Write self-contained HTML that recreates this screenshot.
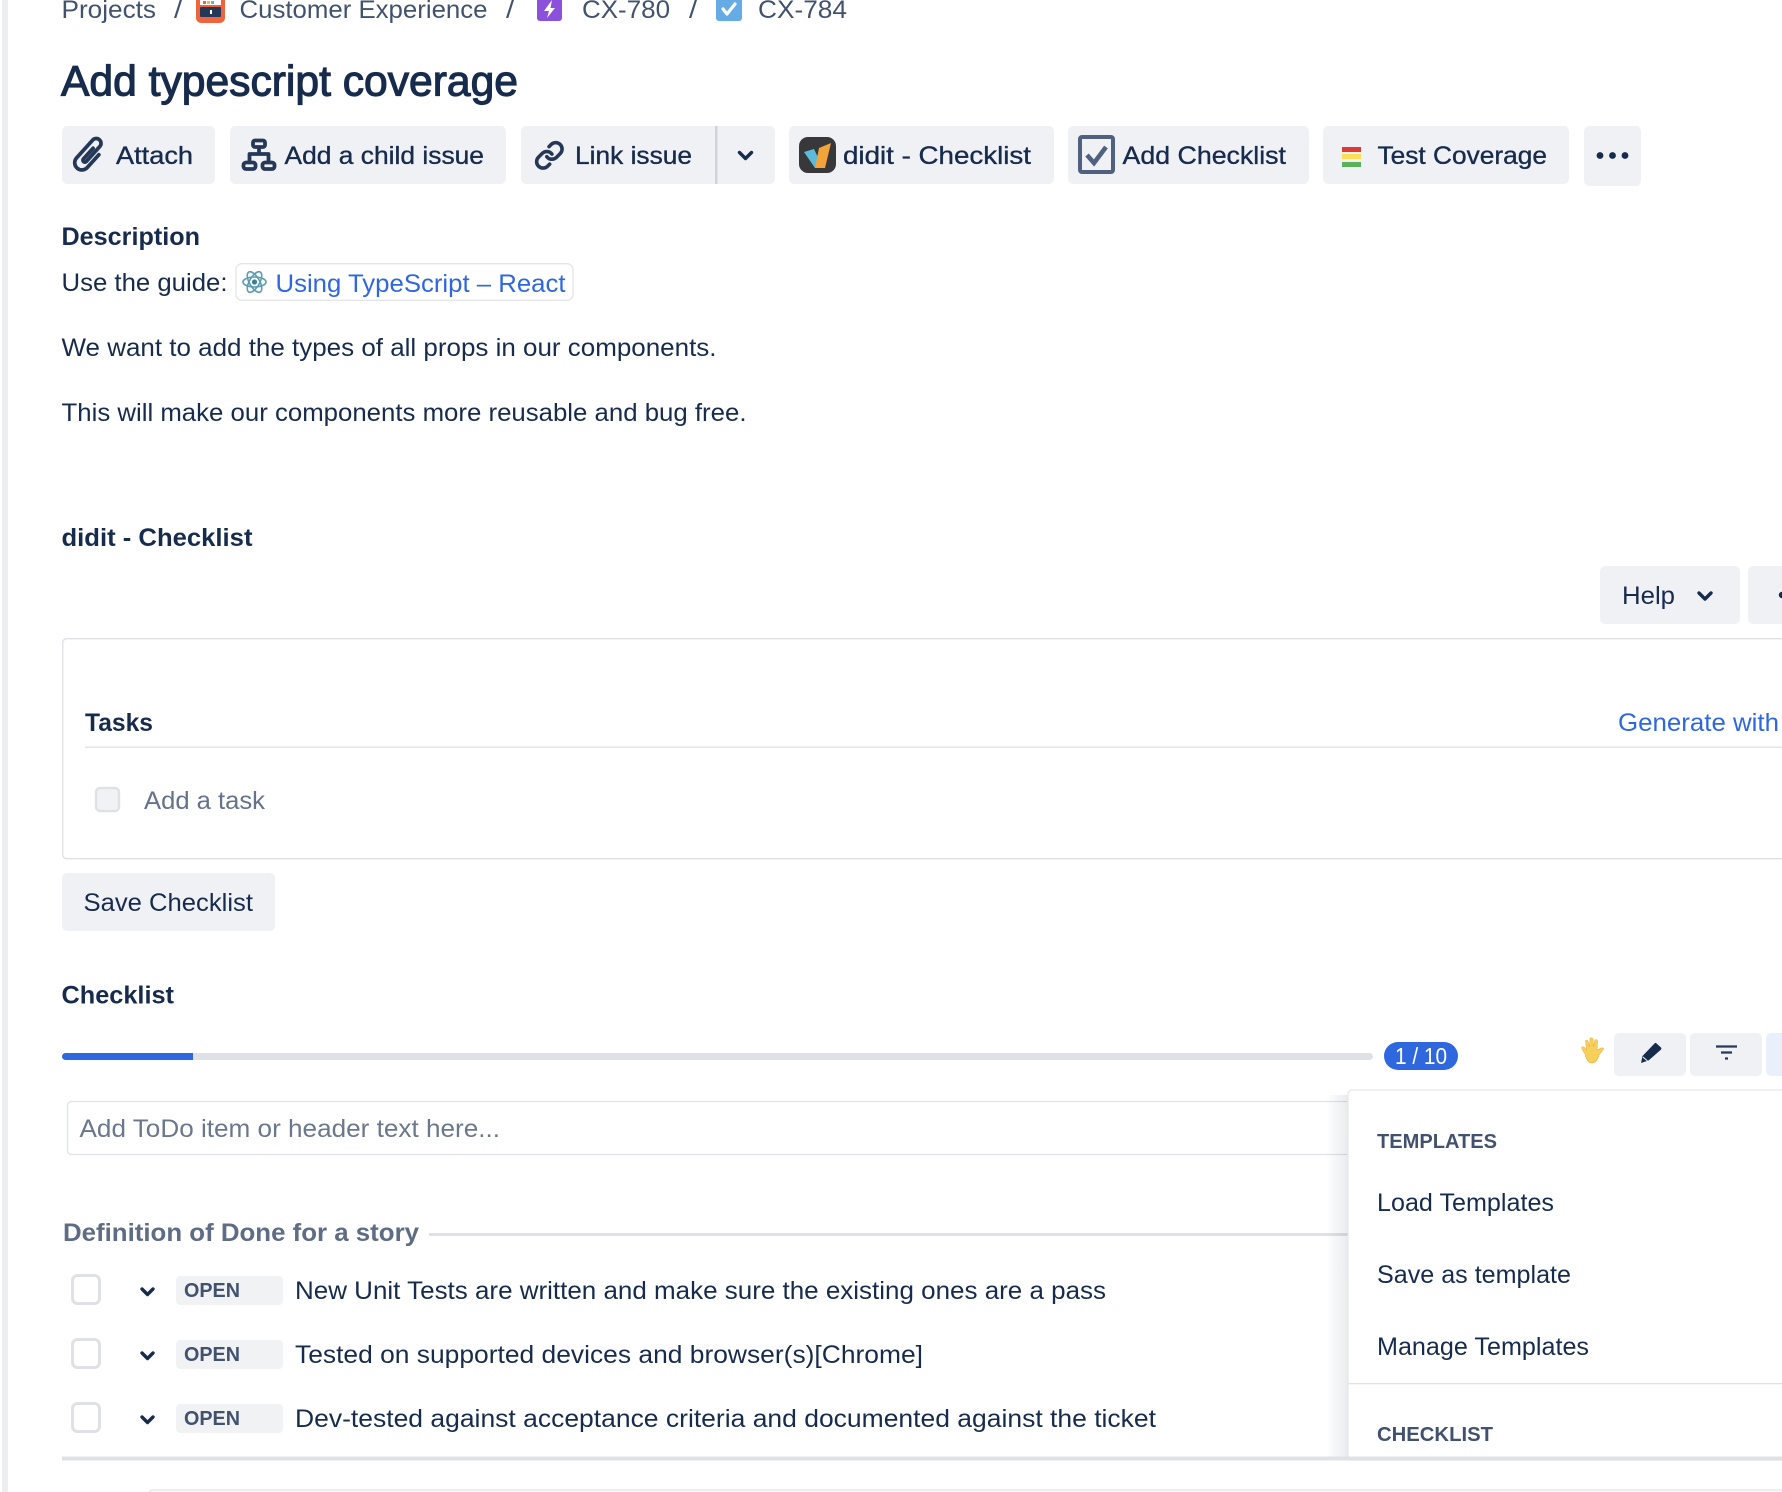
<!DOCTYPE html>
<html lang="en">
<head>
<meta charset="utf-8">
<title>Add typescript coverage</title>
<style>
html,body{margin:0;padding:0;background:#fff;width:1782px;height:1492px;overflow:hidden}
svg{display:block}
text{font-family:"Liberation Sans",sans-serif;fill:#172B4D;font-size:25px}
.m{font-weight:400;stroke:#172B4D;stroke-width:.35px}
.b{font-weight:700}
.bc{fill:#42526E}
.btn{fill:#F0F1F4}
</style>
</head>
<body>
<svg width="1782" height="1492" viewBox="0 0 1782 1492" xmlns="http://www.w3.org/2000/svg">
<defs>
<linearGradient id="sh" x1="0" x2="1" y1="0" y2="0"><stop offset="0" stop-color="#091E42" stop-opacity="0"/><stop offset="1" stop-color="#091E42" stop-opacity=".09"/></linearGradient>
</defs>
<rect x="0" y="0" width="1782" height="1492" fill="#fff"/>
<rect x="2" y="0" width="6" height="1492" fill="#ECEEF1"/>

<!-- breadcrumb -->
<text class="bc" x="61.500" y="18" textLength="94.500" lengthAdjust="spacingAndGlyphs">Projects</text>
<text class="bc" x="174" y="18" textLength="8" lengthAdjust="spacingAndGlyphs">/</text>
<rect x="196" y="-8" width="29" height="31" rx="5" fill="#F0643D"/>
<rect x="200" y="-4" width="21" height="9" fill="#fff"/>
<rect x="203" y="1" width="3" height="3" fill="#F0643D"/><rect x="207" y="1" width="3" height="3" fill="#F5B53F"/><rect x="211" y="1" width="3" height="3" fill="#5AB6E8"/>
<rect x="200" y="7" width="21" height="10" rx="1" fill="#253858"/>
<rect x="210" y="10" width="2" height="4" fill="#fff"/>
<text class="bc" x="239.500" y="18" textLength="248" lengthAdjust="spacingAndGlyphs">Customer Experience</text>
<text class="bc" x="506" y="18" textLength="8" lengthAdjust="spacingAndGlyphs">/</text>
<rect x="537" y="-4" width="25" height="25" rx="3" fill="#8B50DC"/>
<path d="M552 0 L544 11 H549 L547 18 L555 8 H550.500 Z" fill="#fff"/>
<text class="bc" x="582" y="18" textLength="88" lengthAdjust="spacingAndGlyphs">CX-780</text>
<text class="bc" x="689" y="18" textLength="8" lengthAdjust="spacingAndGlyphs">/</text>
<rect x="716" y="-4" width="26" height="25" rx="3" fill="#65ACE6"/>
<path d="M723 9 L727 14 L735 4" fill="none" stroke="#fff" stroke-width="3.200" stroke-linecap="round" stroke-linejoin="round"/>
<text class="bc" x="758" y="18" textLength="89" lengthAdjust="spacingAndGlyphs">CX-784</text>

<!-- title -->
<text x="61" y="95.500" style="font-size:43px;font-weight:400;stroke:#172B4D;stroke-width:1.150px" textLength="457" lengthAdjust="spacingAndGlyphs">Add typescript coverage</text>

<!-- toolbar -->
<rect class="btn" x="62" y="126" width="153" height="58" rx="5"/>
<rect class="btn" x="230" y="126" width="276" height="58" rx="5"/>
<rect class="btn" x="521" y="126" width="254" height="58" rx="5"/>
<rect x="715" y="126" width="2.500" height="58" fill="#CFD3DB"/>
<rect class="btn" x="789" y="126" width="265" height="58" rx="5"/>
<rect class="btn" x="1068" y="126" width="241" height="58" rx="5"/>
<rect class="btn" x="1323" y="126" width="246" height="58" rx="5"/>
<rect class="btn" x="1584" y="126" width="57" height="60" rx="5"/>

<g transform="translate(90 154.500) rotate(42) scale(.96)" fill="none" stroke="#253858" stroke-width="3.900" stroke-linecap="round">
<path d="M7 -6 V12 a7.500 7.500 0 0 1 -15 0 V-13 a5 5 0 0 1 10 0 V8 a2 2 0 0 1 -4 0 V-7"/>
</g>
<text class="m" x="116" y="164" textLength="77" lengthAdjust="spacingAndGlyphs">Attach</text>

<g fill="none" stroke="#253858" stroke-width="3.800" stroke-linejoin="round">
<rect x="253" y="140.500" width="12" height="6.500" rx="2"/>
<path d="M259 147 V154 M249.500 162 V154 H268.500 V162"/>
<rect x="243.500" y="162.500" width="12" height="6.500" rx="2.500"/>
<rect x="262.500" y="162.500" width="12" height="6.500" rx="2.500"/>
</g>
<text class="m" x="284.500" y="164" textLength="199.500" lengthAdjust="spacingAndGlyphs">Add a child issue</text>

<g transform="translate(534 140) scale(1.28)" fill="none" stroke="#253858" stroke-width="2.800" stroke-linecap="round" stroke-linejoin="round">
<path d="M10 13a5 5 0 0 0 7.540.54l3-3a5 5 0 0 0-7.070-7.070l-1.720 1.710"/>
<path d="M14 11a5 5 0 0 0-7.540-.54l-3 3a5 5 0 0 0 7.070 7.070l1.710-1.710"/>
</g>
<text class="m" x="575" y="164" textLength="117" lengthAdjust="spacingAndGlyphs">Link issue</text>
<path d="M739.500 152.500 L745.500 158.500 L751.500 152.500" fill="none" stroke="#172B4D" stroke-width="3.400" stroke-linecap="round" stroke-linejoin="round"/>

<rect x="799" y="137" width="37" height="36" rx="9" fill="#38373A"/>
<path d="M804 152 L814 149 L823 168 H815 Z" fill="#5CBBDA"/>
<path d="M815 168 L819 148 L831 143 L825 168 Z" fill="#F2A33A"/>
<text class="m" x="843" y="164" textLength="188" lengthAdjust="spacingAndGlyphs">didit - Checklist</text>

<rect x="1080" y="137" width="33" height="35" rx="2" fill="none" stroke="#50607F" stroke-width="4"/>
<path d="M1087 155 L1094 163 L1106 147" fill="none" stroke="#50607F" stroke-width="4.600"/>
<text class="m" x="1122.500" y="164" textLength="163.500" lengthAdjust="spacingAndGlyphs">Add Checklist</text>

<rect x="1342" y="147" width="19" height="5" fill="#DD3B32"/>
<rect x="1342" y="154" width="19" height="5" fill="#FADF56"/>
<rect x="1342" y="162" width="19" height="5" fill="#5CB25A"/>
<text class="m" x="1377.500" y="164" textLength="169.500" lengthAdjust="spacingAndGlyphs">Test Coverage</text>

<circle cx="1600" cy="155.500" r="3.400" fill="#172B4D"/><circle cx="1612.500" cy="155.500" r="3.400" fill="#172B4D"/><circle cx="1625" cy="155.500" r="3.400" fill="#172B4D"/>

<!-- description -->
<text class="b" x="61.500" y="245" textLength="138.500" lengthAdjust="spacingAndGlyphs">Description</text>
<text x="61.500" y="291" textLength="166" lengthAdjust="spacingAndGlyphs">Use the guide:</text>
<rect x="236" y="263.700" width="337" height="36.600" rx="6" fill="#fff" stroke="#E3E5EA" stroke-width="1.300"/>
<g fill="none" stroke="#5C9CB0" stroke-width="1.600">
<ellipse cx="254.500" cy="282" rx="11.500" ry="5"/>
<ellipse cx="254.500" cy="282" rx="11.500" ry="5" transform="rotate(60 254.500 282)"/>
<ellipse cx="254.500" cy="282" rx="11.500" ry="5" transform="rotate(120 254.500 282)"/>
</g>
<circle cx="254.500" cy="282" r="2.600" fill="#3E7F96"/>
<text x="275.500" y="292" style="fill:#2F67DF" textLength="290" lengthAdjust="spacingAndGlyphs">Using TypeScript – React</text>
<text x="61.500" y="356" textLength="655" lengthAdjust="spacingAndGlyphs">We want to add the types of all props in our components.</text>
<text x="61.500" y="421" textLength="685" lengthAdjust="spacingAndGlyphs">This will make our components more reusable and bug free.</text>

<!-- didit -->
<text class="b" x="61.500" y="546" textLength="191" lengthAdjust="spacingAndGlyphs">didit - Checklist</text>
<rect class="btn" x="1600" y="566" width="140" height="58" rx="5"/>
<text x="1622" y="604" textLength="53" lengthAdjust="spacingAndGlyphs">Help</text>
<path d="M1699 593 L1705 599 L1711 593" fill="none" stroke="#172B4D" stroke-width="3.400" stroke-linecap="round" stroke-linejoin="round"/>
<rect class="btn" x="1748" y="566" width="60" height="58" rx="5"/>
<circle cx="1782" cy="595" r="3.200" fill="#172B4D"/>

<rect x="62.700" y="638.700" width="1760" height="220" rx="4" fill="#fff" stroke="#DFE1E6" stroke-width="1.400"/>
<text class="b" x="85" y="731" textLength="68" lengthAdjust="spacingAndGlyphs">Tasks</text>
<text x="1618" y="731" style="fill:#2F67DF" textLength="161" lengthAdjust="spacingAndGlyphs">Generate with</text>
<rect x="85" y="746.500" width="1697" height="1.400" fill="#DFE1E6"/>
<rect x="96" y="788" width="23" height="23" rx="4" fill="#F1F2F4" stroke="#DFE1E6" stroke-width="2.400"/>
<text x="144" y="809" style="fill:#66728A" textLength="121" lengthAdjust="spacingAndGlyphs">Add a task</text>

<rect class="btn" x="62" y="873" width="213" height="58" rx="5"/>
<text x="83.500" y="911" textLength="169.500" lengthAdjust="spacingAndGlyphs">Save Checklist</text>

<!-- checklist -->
<text class="b" x="61.500" y="1003.500" textLength="112.500" lengthAdjust="spacingAndGlyphs">Checklist</text>
<rect x="62" y="1053" width="1311" height="7" rx="3.500" fill="#DFE1E6"/>
<path d="M65.500 1053 H193 V1060 H65.500 a3.500 3.500 0 0 1 0 -7 Z" fill="#2F67DF"/>
<rect x="1384" y="1042" width="74" height="28" rx="14" fill="#2F67DF"/>
<text x="1395" y="1064" style="fill:#fff;font-size:23px" textLength="52" lengthAdjust="spacingAndGlyphs">1 / 10</text>

<!-- hand -->
<path d="M1585 1054 L1582 1049 Q1581 1046 1584 1047 L1586.500 1050 L1585.500 1041 Q1586 1039 1588 1041 L1589.500 1047 L1590 1038.500 Q1592 1037 1593 1039 L1593.500 1047 L1595 1040 Q1597 1039 1597.500 1041 L1597 1050 L1601 1048 Q1604 1047.500 1603.500 1049 L1599 1055 Q1597 1063 1591 1063 Q1587 1062 1585 1054 Z" fill="#F7D05C" stroke="#E8B045" stroke-width=".6"/>

<rect class="btn" x="1614" y="1033" width="72" height="43" rx="5"/>
<path d="M1656 1043 L1661 1047.500 Q1662 1049 1660.500 1050 L1648.500 1060.500 L1641 1063 L1642.500 1056 L1654.500 1043.500 Q1655.200 1042.700 1656 1043 Z" fill="#172B4D"/>
<path d="M1643 1057 L1647.500 1061" stroke="#F0F1F4" stroke-width="1.100"/>
<rect class="btn" x="1690" y="1033" width="72" height="43" rx="5"/>
<path d="M1716 1046.500 H1737 M1721 1052.500 H1732 M1725 1058.500 H1728" stroke="#253858" stroke-width="2.200" fill="none"/>
<rect x="1766" y="1033" width="30" height="43" rx="5" fill="#E9F0FC"/>

<!-- add todo input -->
<rect x="67.500" y="1101.500" width="1400" height="53" rx="4" fill="#fff" stroke="#E1E3E8" stroke-width="1.300"/>
<text x="79.500" y="1137" style="fill:#6B778C" textLength="420.500" lengthAdjust="spacingAndGlyphs">Add ToDo item or header text here...</text>

<text class="b" x="63" y="1241" style="fill:#5E6C84" textLength="356" lengthAdjust="spacingAndGlyphs">Definition of Done for a story</text>
<rect x="429" y="1233" width="930" height="3" fill="#DFE1E6"/>

<!-- rows -->
<g fill="#fff" stroke="#DFE1E6" stroke-width="3">
<rect x="72.500" y="1275.500" width="27" height="28" rx="5"/>
<rect x="72.500" y="1339.500" width="27" height="28" rx="5"/>
<rect x="72.500" y="1403.500" width="27" height="28" rx="5"/>
</g>
<g fill="none" stroke="#172B4D" stroke-width="3.400" stroke-linecap="round" stroke-linejoin="round">
<path d="M142 1289 L147.500 1294.500 L153 1289"/>
<path d="M142 1353 L147.500 1358.500 L153 1353"/>
<path d="M142 1417 L147.500 1422.500 L153 1417"/>
</g>
<rect x="176" y="1276" width="107" height="29" rx="4" fill="#F1F2F4"/>
<rect x="176" y="1340" width="107" height="29" rx="4" fill="#F1F2F4"/>
<rect x="176" y="1404" width="107" height="29" rx="4" fill="#F1F2F4"/>
<text class="b" x="184" y="1297" style="font-size:20px;fill:#42526E" textLength="56" lengthAdjust="spacingAndGlyphs">OPEN</text>
<text class="b" x="184" y="1361" style="font-size:20px;fill:#42526E" textLength="56" lengthAdjust="spacingAndGlyphs">OPEN</text>
<text class="b" x="184" y="1425" style="font-size:20px;fill:#42526E" textLength="56" lengthAdjust="spacingAndGlyphs">OPEN</text>
<text x="295" y="1299" textLength="811" lengthAdjust="spacingAndGlyphs">New Unit Tests are written and make sure the existing ones are a pass</text>
<text x="295" y="1363" textLength="628" lengthAdjust="spacingAndGlyphs">Tested on supported devices and browser(s)[Chrome]</text>
<text x="295" y="1427" textLength="861" lengthAdjust="spacingAndGlyphs">Dev-tested against acceptance criteria and documented against the ticket</text>

<!-- dropdown -->
<rect x="1326" y="1095" width="22" height="362" fill="url(#sh)"/>
<path d="M1348 1460 V1094 a4 4 0 0 1 4 -4 H1790 V1460 Z" fill="#fff" stroke="#E4E6EB" stroke-width="1.200"/>
<text class="b" x="1377" y="1148" style="font-size:20px;fill:#42526E" textLength="120" lengthAdjust="spacingAndGlyphs">TEMPLATES</text>
<text x="1377" y="1211" textLength="177" lengthAdjust="spacingAndGlyphs">Load Templates</text>
<text x="1377" y="1283" textLength="194" lengthAdjust="spacingAndGlyphs">Save as template</text>
<text x="1377" y="1355" textLength="212" lengthAdjust="spacingAndGlyphs">Manage Templates</text>
<rect x="1348" y="1383" width="434" height="1.300" fill="#DFE1E6"/>
<text class="b" x="1377" y="1441" style="font-size:20px;fill:#42526E" textLength="116" lengthAdjust="spacingAndGlyphs">CHECKLIST</text>

<rect x="62" y="1456.500" width="1720" height="4" fill="#DFE1E6"/>
<path d="M149 1492 V1494 a4 4 0 0 1 4 -4 H1782" fill="none" stroke="#E1E3E8" stroke-width="1.300"/>
</svg>
</body>
</html>
